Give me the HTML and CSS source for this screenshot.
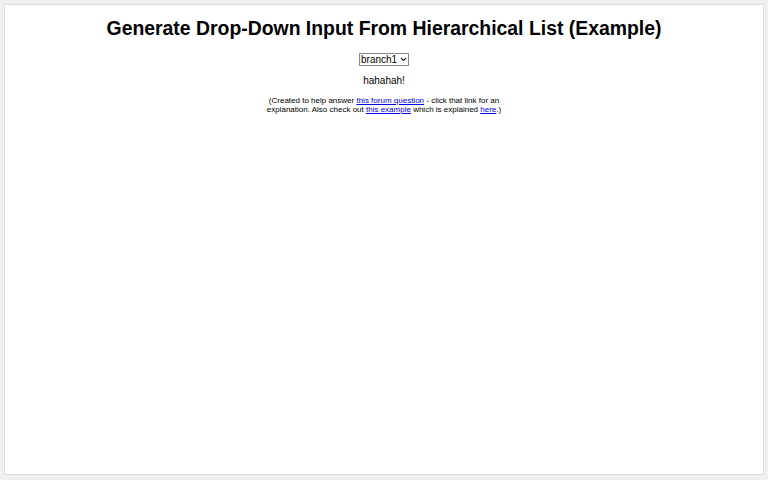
FILE: index.html
```html
<!DOCTYPE html>
<html>
<head>
<meta charset="utf-8">
<link rel="stylesheet" href="styles.css">
</head>
<body>
<div class="panel">
  <h1 class="title">Generate Drop-Down Input From Hierarchical List (Example)</h1>
  <div class="picker">
    <span class="drop-wrap">
      <select class="drop"><option>branch1</option><option>branch2</option></select>
      <svg class="chev" width="7" height="5" viewBox="0 0 7 5"><path d="M1 1 L3.5 3.5 L6 1" fill="none" stroke="#222" stroke-width="1.2"/></svg>
    </span>
  </div>
  <p class="result">hahahah!</p>
  <p class="note">(Created to help answer <a href="#">this forum question</a> - click that link for an explanation. Also check out <a href="#">this example</a> which is explained <a href="#">here</a>.)</p>
</div>
</body>
</html>
```
FILE: styles.css
```css
html, body { height: 100%; }
body {
  margin: 0;
  padding: 4px;
  box-sizing: border-box;
  background: #f0f0f0;
  font-family: "Liberation Sans", Arial, sans-serif;
}
.panel {
  background: #fff;
  border: 1px solid #dcdcdc;
  height: 471px;
  box-sizing: border-box;
  text-align: center;
  padding-top: 9px;
}
.title {
  margin: 0;
  font-size: 19.4px;
  font-weight: bold;
  color: #000;
  line-height: 28px;
}
.picker { margin-top: 11px; line-height: 0; }
.drop-wrap {
  position: relative;
  display: inline-block;
}
.drop {
  -webkit-appearance: none;
  appearance: none;
  font-family: "Liberation Sans", Arial, sans-serif;
  font-size: 10px;
  height: 13px;
  line-height: 11px;
  padding: 0 10px 0 1px;
  margin: 0;
  border: 1px solid #8a8a8a;
  border-radius: 0;
  background: #fff;
  color: #000;
}
.chev {
  position: absolute;
  right: 2px;
  top: 4px;
  pointer-events: none;
}
.result {
  margin: 8px 0 0;
  font-size: 10px;
  line-height: 14px;
}
.note {
  width: 240px;
  margin: 8px auto 0;
  font-size: 8px;
  line-height: 9px;
}
.note a { color: #00e; }
```
